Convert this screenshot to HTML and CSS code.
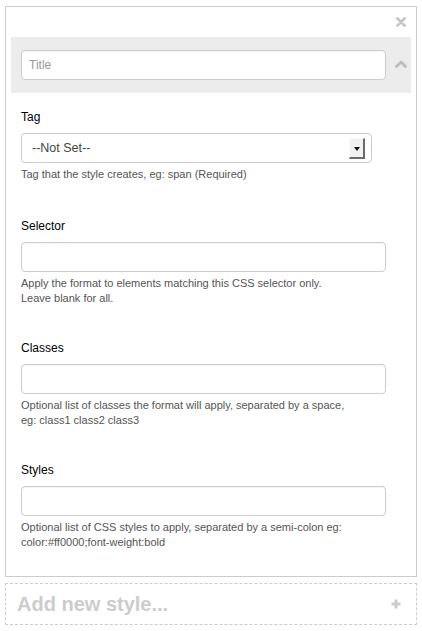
FILE: index.html
```html
<!DOCTYPE html>
<html>
<head>
<meta charset="utf-8">
<link rel="stylesheet" href="styles.css">
</head>
<body>
<div class="style-card">
  <div class="card-top">
    <span class="close-btn" title="Remove">
      <svg width="10" height="10" viewBox="0 0 10 10"><path d="M1.5 1.5 L8.5 8.5 M8.5 1.5 L1.5 8.5" stroke="#c6c6c6" stroke-width="2.8" stroke-linecap="round"/></svg>
    </span>
  </div>
  <div class="band">
    <input class="field" type="text" placeholder="Title">
    <span class="chev-box">
      <svg width="12" height="8" viewBox="0 0 12 8"><path d="M1.5 6.5 L6 2 L10.5 6.5" fill="none" stroke="#bdbdbd" stroke-width="2.8" stroke-linecap="round" stroke-linejoin="round"/></svg>
    </span>
  </div>
  <div class="form">
    <div class="group group-tag">
      <label class="lbl">Tag</label>
      <div class="select-wrap">
        <select class="select"><option>--Not Set--</option></select>
        <span class="select-btn"><span class="tri"></span></span>
      </div>
      <p class="help">Tag that the style creates, eg: span (Required)</p>
    </div>
    <div class="group">
      <label class="lbl">Selector</label>
      <input class="field" type="text">
      <p class="help">Apply the format to elements matching this CSS selector only.<br>Leave blank for all.</p>
    </div>
    <div class="group">
      <label class="lbl">Classes</label>
      <input class="field" type="text">
      <p class="help">Optional list of classes the format will apply, separated by a space,<br>eg: class1 class2 class3</p>
    </div>
    <div class="group last">
      <label class="lbl">Styles</label>
      <input class="field" type="text">
      <p class="help">Optional list of CSS styles to apply, separated by a semi-colon eg:<br>color:#ff0000;font-weight:bold</p>
    </div>
  </div>
</div>
<div class="add-box">
  <span class="add-text">Add new style...</span>
  <svg class="plus" width="10" height="10" viewBox="0 0 10 10"><path d="M5 0.5 V9.5 M0.5 5 H9.5" stroke="#cccccc" stroke-width="3"/></svg>
</div>
</body>
</html>
```

FILE: styles.css
```css
* { box-sizing: border-box; }
html, body { background: #fff; }
body {
  margin: 0;
  padding: 6px 5px 0 5px;
  font-family: "Liberation Sans", Arial, Helvetica, sans-serif;
  color: #000;
}
.style-card {
  border: 1px solid #cccccc;
  padding: 0 5px 26px 5px;
}
.card-top {
  height: 30px;
  display: flex;
  align-items: center;
  justify-content: flex-end;
  padding-right: 5px;
}
.close-btn { display: flex; width: 10px; height: 10px; }
.band {
  background: #ececec;
  padding: 13px 0 13px 10px;
  display: flex;
  align-items: center;
}
.field {
  display: block;
  width: 365px;
  height: 30px;
  margin: 0;
  border: 1px solid #cccccc;
  border-radius: 4px;
  background: #fff;
  padding: 0 7px;
  font-family: "Liberation Sans", Arial, sans-serif;
  font-size: 12px;
  color: #555;
  box-shadow: inset 0 1px 1px rgba(0,0,0,0.04);
  outline: none;
}
.field::placeholder { color: #999; }
.chev-box {
  flex: 1;
  display: flex;
  justify-content: center;
  padding-left: 4px;
  padding-bottom: 2px;
}
.form { padding: 17px 10px 0 10px; }
.group { margin-bottom: 35px; }
.group-tag { margin-bottom: 37px; }
.group.last { margin-bottom: 0; }
.lbl {
  display: block;
  font-size: 12px;
  line-height: 15px;
  margin-bottom: 8px;
  color: #000;
}
.select-wrap {
  position: relative;
  width: 351px;
  height: 30px;
}
.select {
  -webkit-appearance: none;
  appearance: none;
  width: 351px;
  height: 30px;
  margin: 0;
  border: 1px solid #cccccc;
  border-radius: 4px;
  background: #fff;
  padding: 0 10px;
  font-family: "Liberation Sans", Arial, sans-serif;
  font-size: 12.5px;
  color: #444;
  outline: none;
}
.select-btn {
  position: absolute;
  right: 7px;
  top: 5px;
  width: 16px;
  height: 21px;
  background: #f1f1f1;
  border-top: 1px solid #fafafa;
  border-left: 1px solid #fafafa;
  border-right: 2px solid #6b6b6b;
  border-bottom: 2px solid #6b6b6b;
  display: flex;
  align-items: center;
  justify-content: center;
}
.tri {
  width: 0;
  height: 0;
  border-left: 3px solid transparent;
  border-right: 3px solid transparent;
  border-top: 4px solid #111;
  margin-top: 2px;
}
.help {
  margin: 4px 0 0 0;
  font-size: 11px;
  line-height: 15px;
  color: #555;
}
.add-box {
  margin-top: 6px;
  height: 42px;
  border: 1px dashed #cccccc;
  display: flex;
  align-items: center;
  justify-content: space-between;
  padding: 0 15px 0 11px;
}
.add-text {
  font-size: 20px;
  font-weight: bold;
  color: #cccccc;
}
.plus { display: block; }
```
